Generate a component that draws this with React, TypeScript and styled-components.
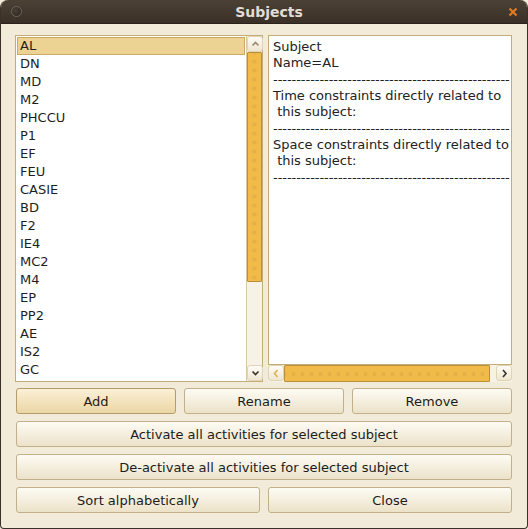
import styled, { createGlobalStyle, css } from "styled-components";

const GlobalStyle = createGlobalStyle`
	html, body {
		margin:0;
		padding:0;
		background:#f2ebd9;
	}
	* {
		box-sizing:border-box;
	}
`;

const subjects = [
	"AL", "DN", "MD", "M2", "PHCCU", "P1", "EF", "FEU", "CASIE", "BD",
	"F2", "IE4", "MC2", "M4", "EP", "PP2", "AE", "IS2", "GC",
];

const rule = "-".repeat(51);

const details = [
	"Subject",
	"Name=AL",
	rule,
	"Time constraints directly related to",
	" this subject:",
	rule,
	"Space constraints directly related to",
	" this subject:",
	rule,
];

const Window = styled.div`
	width:528px;
	height:529px;
	display:flex;
	flex-direction:column;
	background:#f2ebd9;
	border:1px solid #3a3128;
	border-top:none;
	border-radius:8px 8px 4px 4px;
	overflow:hidden;
	font-family:"DejaVu Sans", "Liberation Sans", sans-serif;
	font-size:13px;
	color:#1e1e1e;
`;

const TitleBar = styled.div`
	height:24px;
	flex:none;
	display:flex;
	align-items:center;
	justify-content:space-between;
	padding:0 9px 0 10px;
	background:linear-gradient(#4c4135, #3a3027);
	border-bottom:1px solid #2a231c;
`;

const Title = styled.div`
	font-weight:bold;
	font-size:14px;
	color:#e2ddd4;
	margin-left:8px;
`;

const MenuDot = styled.div`
	width:11px;
	height:11px;
	border-radius:50%;
	background:radial-gradient(circle at 40% 40%, #4a4036, #2a231c);
	border:1px solid #6e655b;
`;

const CloseMark = styled.svg`
	width:10px;
	height:10px;
`;

const Body = styled.div`
	flex:1;
	display:flex;
	flex-direction:column;
	gap:7px;
	padding:11px 15px 0 14px;
`;

const Panels = styled.div`
	display:flex;
	gap:5px;
	height:347px;
	margin-bottom:-1px;
`;

const ListBox = styled.div`
	flex:none;
	width:248px;
	display:flex;
	border:1px solid #c3ac78;
	background:#fff;
`;

const ListItems = styled.div`
	flex:1;
	overflow:hidden;
	padding:1px 1px 0 1px;
`;

const Item = styled.div<{ $selected?: boolean }>`
	height:18px;
	line-height:16px;
	padding:0 2px;
	border:1px solid transparent;
	${(p) => p.$selected && css`
		background:#ecd293;
		border-color:#c9aa62;
	`}
`;

const VScroll = styled.div`
	width:16px;
	display:flex;
	flex-direction:column;
	background:#f7f2e6;
	border-left:1px solid #d8c9a4;
`;

const ArrowBtn = styled.div`
	flex:none;
	width:16px;
	height:16px;
	display:flex;
	align-items:center;
	justify-content:center;
	background:linear-gradient(#fdfbf6, #efe6d2);
	border:1px solid #e1d4b4;
	border-radius:3px;
`;

const TrackFill = styled.div`
	flex:1;
`;

const dots = css`
	background-color:#f0bb48;
	background-image:radial-gradient(circle, #e6b046 1.8px, transparent 2.2px);
	border:1px solid #b98f3b;
`;

const VThumb = styled.div`
	height:230px;
	${dots}
	background-size:14px 9px;
	background-position:center 4px;
	background-repeat:repeat-y;
	border-radius:1px;
`;

const TextPanel = styled.div`
	flex:1;
	min-width:0;
	display:flex;
	flex-direction:column;
`;

const TextArea = styled.div`
	flex:1;
	min-width:0;
	background:#fff;
	border:1px solid #c3ac78;
	padding:3px 0 0 4px;
	overflow:hidden;
	white-space:pre;
	line-height:16px;
	font-size:13px;
`;

const Line = styled.div<{ $rule?: boolean }>`
	height:${(p) => (p.$rule ? "17px" : "16px")};
	padding-top:${(p) => (p.$rule ? "1px" : "0")};
	letter-spacing:${(p) => (p.$rule ? "-0.05px" : "0")};
	color:#222;
`;

const HScroll = styled.div`
	height:17px;
	display:flex;
	background:#f7f2e6;
`;

const HThumb = styled.div`
	flex:1;
	${dots}
	background-size:9px 14px;
	background-position:4px center;
	background-repeat:repeat-x;
	border-radius:1px;
	margin-right:2px;
`;

const SpacerTrack = styled.div`
	width:20px;
	display:flex;
	justify-content:flex-end;
`;

const ButtonRow = styled.div<{ $cols: number }>`
	display:grid;
	grid-template-columns:repeat(${(p) => p.$cols}, 1fr);
	gap:8px;
	padding-left:1px;
`;

const Button = styled.button<{ $default?: boolean }>`
	height:26px;
	font-family:"DejaVu Sans", "Liberation Sans", sans-serif;
	font-size:13px;
	line-height:15px;
	color:#1c1c1c;
	border:1px solid #c2b08a;
	border-radius:3px;
	background:linear-gradient(#fdfbf4, #ece2c9);
	padding:1px 0 0;
	${(p) => p.$default && css`
		background:linear-gradient(#fbf0d6, #ebd6a5);
		border-color:#b59c6b;
	`}
`;

const Chevron = ({ dir, color = "#3a3228" }: { dir: "up" | "down" | "left" | "right"; color?: string }) => {
	const paths = {
		up: "M1.5 5.5 L4.5 2.5 L7.5 5.5",
		down: "M1.5 2.5 L4.5 5.5 L7.5 2.5",
		left: "M5.5 1 L2.5 4.5 L5.5 8",
		right: "M3 1 L6 4.5 L3 8",
	};
	return (
		<svg width="9" height="9" viewBox="0 0 9 9">
			<path d={paths[dir]} fill="none" stroke={color} strokeWidth="1.6" />
		</svg>
	);
};

export default function App() {
	return (
		<>
			<GlobalStyle />
			<Window>
				<TitleBar>
					<MenuDot />
					<Title>Subjects</Title>
					<CloseMark viewBox="0 0 10 10">
						<path d="M1.5 1.5 L8.5 8.5 M8.5 1.5 L1.5 8.5" stroke="#e07b1f" strokeWidth="2.2" />
					</CloseMark>
				</TitleBar>
				<Body>
					<Panels>
						<ListBox>
							<ListItems>
								{subjects.map((s, i) => (
									<Item key={s} $selected={i === 0}>{s}</Item>
								))}
							</ListItems>
							<VScroll>
								<ArrowBtn><Chevron dir="up" color="#9a8a6c" /></ArrowBtn>
								<VThumb />
								<TrackFill />
								<ArrowBtn><Chevron dir="down" /></ArrowBtn>
							</VScroll>
						</ListBox>
						<TextPanel>
							<TextArea>
								{details.map((l, i) => (
									<Line key={i} $rule={l === rule}>{l}</Line>
								))}
							</TextArea>
							<HScroll>
								<ArrowBtn><Chevron dir="left" color="#e0b050" /></ArrowBtn>
								<HThumb />
								<SpacerTrack>
									<ArrowBtn><Chevron dir="right" /></ArrowBtn>
								</SpacerTrack>
							</HScroll>
						</TextPanel>
					</Panels>
					<ButtonRow $cols={3}>
						<Button $default>Add</Button>
						<Button>Rename</Button>
						<Button>Remove</Button>
					</ButtonRow>
					<ButtonRow $cols={1}>
						<Button>Activate all activities for selected subject</Button>
					</ButtonRow>
					<ButtonRow $cols={1}>
						<Button>De-activate all activities for selected subject</Button>
					</ButtonRow>
					<ButtonRow $cols={2}>
						<Button>Sort alphabetically</Button>
						<Button>Close</Button>
					</ButtonRow>
				</Body>
			</Window>
		</>
	);
}
